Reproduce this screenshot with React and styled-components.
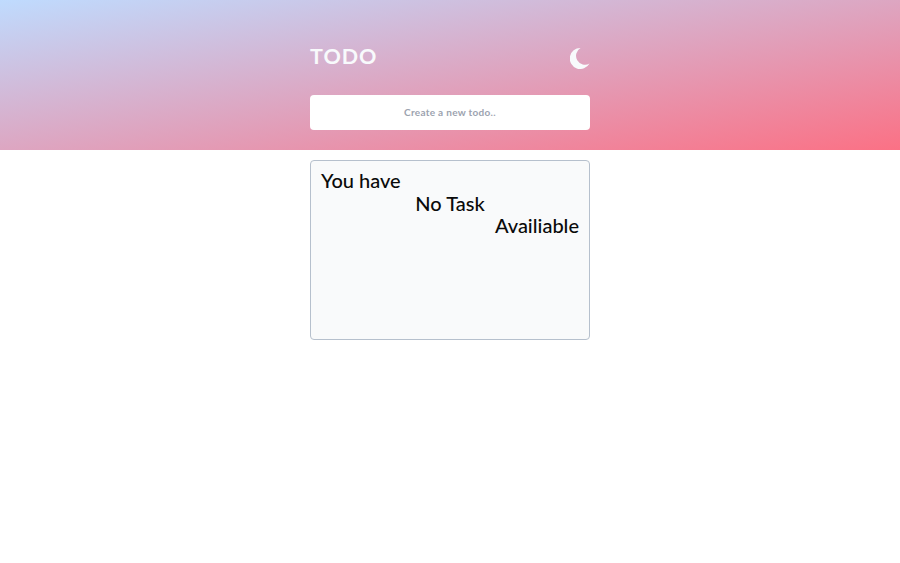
import React from 'react';
import styled, { createGlobalStyle } from 'styled-components';

const GlobalStyle = createGlobalStyle`
    html, body {
        margin: 0;
        padding: 0;
        background: #fff;
        font-family: "Lato", "Noto Sans", sans-serif;
    }
`;
const Page = styled.div`
    min-height: 563px;
    background: #fff;
`;
const Hero = styled.header`
    height: 150px;
    box-sizing: border-box;
    padding-top: 39px;
    background-image: linear-gradient(to bottom right, #bfdbfe 0%, #fb7185 100%);
`;
const Column = styled.div`
    width: 280px;
    margin: 0 auto;
`;
const TopRow = styled.div`
    display: flex;
    align-items: center;
    justify-content: space-between;
    height: 34px;
    margin-bottom: 22px;
`;
const Title = styled.h1`
    margin: 0;
    color: #f8fafc;
    font-size: 21.5px;
    font-weight: 700;
    letter-spacing: 1px;
    line-height: 30px;
`;
const ThemeButton = styled.button`
    display: flex;
    width: 20px;
    height: 22px;
    padding: 0;
    border: 0;
    background: none;
    margin-top: 3px;
`;
const TodoInput = styled.input`
    display: block;
    box-sizing: border-box;
    width: 100%;
    height: 35px;
    padding: 0 10px 2px;
    border: 0;
    border-radius: 4px;
    background: #fff;
    text-align: center;
    font-family: inherit;
    font-size: 10px;
    font-weight: 700;
    letter-spacing: 0.3px;
    &::placeholder {
        color: #9ca3af;
        opacity: 1;
    }
`;
const Card = styled.section`
    box-sizing: border-box;
    height: 180px;
    margin-top: 10px;
    padding: 8px 10px 10px;
    border: 1px solid #b6c0cd;
    border-radius: 4px;
    background: #f9fafb;
`;
const Line = styled.p`
    margin: 0;
    color: #0a0a0a;
    font-size: 20px;
    font-weight: 500;
    line-height: 22.5px;
    text-align: ${(props) => props.$align};
`;

const MoonIcon = () => (
    <svg width="20" height="22" viewBox="0 0 20 22">
        <path d="M10.5 1 A10.5 10.5 0 1 0 19.5 16.5 A8.8 8.8 0 0 1 10.5 1 Z" fill="#f8fafc" />
    </svg>
);

const App = () => {
    return (
        <Page>
            <GlobalStyle />
            <Hero>
                <Column>
                    <TopRow>
                        <Title>TODO</Title>
                        <ThemeButton aria-label="toggle theme"><MoonIcon /></ThemeButton>
                    </TopRow>
                    <TodoInput placeholder="Create a new todo.." />
                </Column>
            </Hero>
            <Column>
                <Card>
                    <Line $align="left">You have</Line>
                    <Line $align="center">No Task</Line>
                    <Line $align="right">Availiable</Line>
                </Card>
            </Column>
        </Page>
    );
};

export default App;
